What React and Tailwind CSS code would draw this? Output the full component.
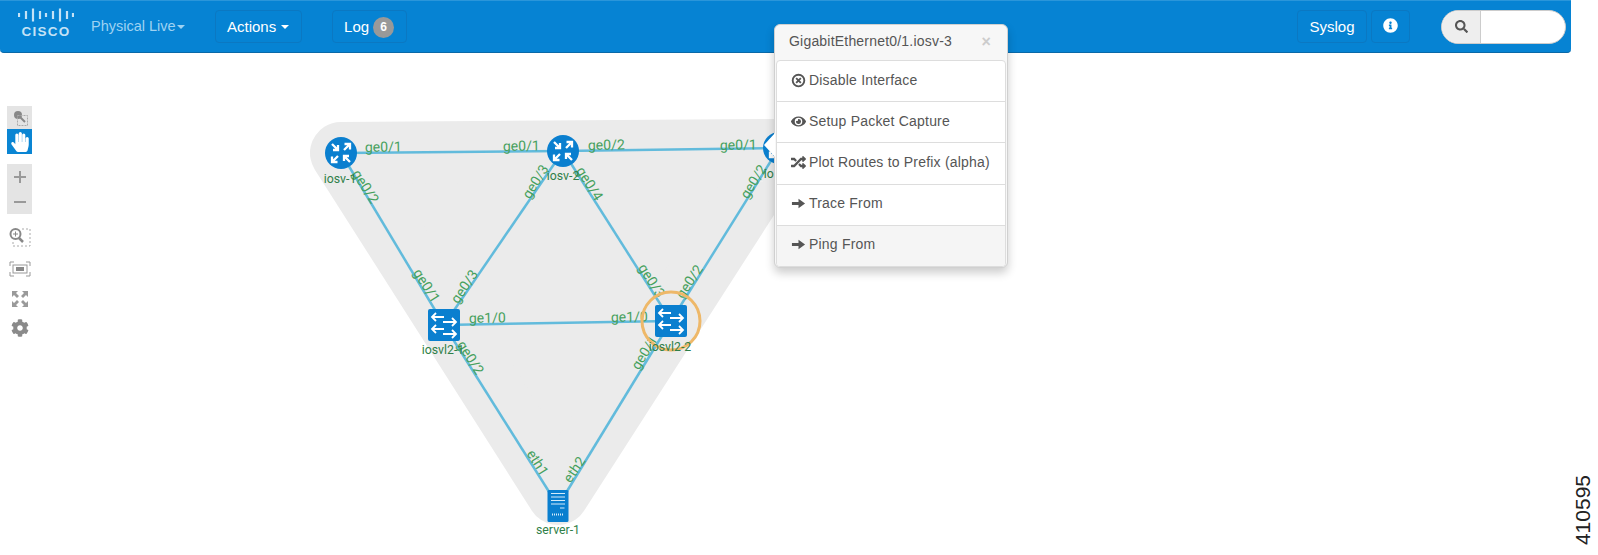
import React from "react";
import { FaCog, FaEye, FaHandPaper, FaInfoCircle, FaRandom, FaSearch } from "react-icons/fa";

const links = [
  [341, 153, 563, 151],
  [563, 151, 779, 148],
  [341, 153, 444, 325],
  [563, 151, 444, 325],
  [563, 151, 671, 321],
  [779, 148, 671, 321],
  [444, 325, 671, 321],
  [444, 325, 558, 506],
  [671, 321, 558, 506],
];

const flatLabels = [
  ["ge0/1", 365, 152, -1],
  ["ge0/1", 503, 151, -1],
  ["ge0/2", 588, 150, -1],
  ["ge0/1", 720, 150, -1],
  ["ge1/0", 469, 323, -1],
  ["ge1/0", 611, 322, -1],
];

const slantLabels = [
  ["ge0/2", 365, 187, 58],
  ["ge0/3", 536, 182, -58],
  ["ge0/4", 589, 184, 58],
  ["ge0/2", 754, 182, -58],
  ["ge0/1", 426, 286, 58],
  ["ge0/3", 465, 287, -56],
  ["ge0/3", 651, 281, 58],
  ["ge0/2", 690, 282, -56],
  ["ge0/2", 470, 358, 58],
  ["ge0/1", 645, 353, -58],
  ["eth1", 537, 463, 58],
  ["eth2", 575, 470, -56],
];

const nodeLabels = [
  ["iosv-1", 340, 183],
  ["iosv-2", 563, 180],
  ["iosv-3", 780, 178],
  ["iosvl2-1", 443, 354],
  ["iosvl2-2", 670, 351],
  ["server-1", 558, 534],
];

const logoBars = [
  [1, 4],
  [8, 8],
  [15, 13],
  [22, 8],
  [28, 4],
  [35, 8],
  [42, 13],
  [49, 8],
  [55, 4],
];

const RemoveIcon = ({ className }) => (
  <svg className={className} viewBox="0 0 16 16">
    <circle cx="8" cy="8" r="6.2" fill="none" stroke="currentColor" strokeWidth="2" />
    <path d="M5.5 5.5 L10.5 10.5 M10.5 5.5 L5.5 10.5" stroke="currentColor" strokeWidth="2" />
  </svg>
);

const ArrowIcon = ({ className }) => (
  <svg className={className} viewBox="0 0 16 16">
    <path d="M1 6.5 H8 V3 L15 8 L8 13 V9.5 H1 Z" fill="currentColor" />
  </svg>
);

const menuItems = [
  { icon: RemoveIcon, label: "Disable Interface" },
  { icon: FaEye, label: "Setup Packet Capture" },
  { icon: FaRandom, label: "Plot Routes to Prefix (alpha)" },
  { icon: ArrowIcon, label: "Trace From" },
  { icon: ArrowIcon, label: "Ping From", active: true },
];

const Router = ({ x, y }) => (
  <g transform={`translate(${x} ${y})`}>
    <circle r="16" fill="#0a7fcf" />
    <g stroke="#fff" strokeWidth="2.3" fill="none">
      <path d="M-9 -9 L-3 -3 M-3 -8 V-3 H-8" />
      <path d="M9 9 L3 3 M3 8 V3 H8" />
      <path d="M3 -3 L9 -9 M3.5 -9 H9 V-3.5" />
      <path d="M-3 3 L-9 9 M-3.5 9 H-9 V3.5" />
    </g>
  </g>
);

const Switch = ({ x, y }) => (
  <g transform={`translate(${x} ${y})`}>
    <rect x="-16" y="-16" width="32" height="32" rx="2" fill="#0a7fcf" />
    <g stroke="#fff" strokeWidth="1.8" fill="none">
      <path d="M-12 -8 H0 M-8 -12 L-12 -8 L-8 -4" />
      <path d="M-1 -3 H12 M8 -7 L12 -3 L8 1" />
      <path d="M-12 4 H0 M-8 0 L-12 4 L-8 8" />
      <path d="M-1 9 H12 M8 5 L12 9 L8 13" />
    </g>
  </g>
);

const Server = ({ x, y }) => (
  <g transform={`translate(${x} ${y})`}>
    <rect x="-10.5" y="-16" width="21" height="32" rx="1.5" fill="#0a7fcf" />
    <g stroke="#d5ecfa" fill="none">
      <path d="M-7 -12.5 H7" />
      <path d="M-7 -9 H7" />
      <path d="M-7 -5.5 H7" />
      <path d="M-7 -2 H7" />
      <path d="M2 2 H6.5" />
      <path d="M-6 8.5 H6" strokeDasharray="1 1" strokeWidth="2" />
    </g>
  </g>
);

const Topology = () => (
  <svg className="absolute left-0 top-0" width="1598" height="555" viewBox="0 0 1598 555">
    <polygon
      points="341,153 779,150 558,494"
      fill="#ebebeb"
      stroke="#ebebeb"
      strokeWidth="62"
      strokeLinejoin="round"
    />
    {links.map(([x1, y1, x2, y2], i) => (
      <line key={i} x1={x1} y1={y1} x2={x2} y2={y2} stroke="#62bbdc" strokeWidth="2.5" />
    ))}
    <g fontFamily="Roboto, sans-serif" fontSize="14" fill="#45a05c">
      {flatLabels.map(([text, x, y, a], i) => (
        <text key={i} x={x} y={y} transform={`rotate(${a} ${x} ${y})`}>
          {text}
        </text>
      ))}
      {slantLabels.map(([text, x, y, a], i) => (
        <text
          key={i}
          x={x}
          y={y + 4}
          textAnchor="middle"
          transform={`rotate(${a} ${x} ${y})`}
        >
          {text}
        </text>
      ))}
    </g>
    <Router x={341} y={153} />
    <Router x={563} y={151} />
    <Router x={779} y={148} />
    <Switch x={444} y={325} />
    <Switch x={671} y={321} />
    <Server x={558} y={506} />
    <circle cx="671" cy="321" r="29" fill="none" stroke="#eeb869" strokeWidth="3" />
    <g fontFamily="Roboto, sans-serif" fontSize="12.3" fill="#2f7f48" textAnchor="middle">
      {nodeLabels.map(([text, x, y], i) => (
        <text key={i} x={x} y={y}>
          {text}
        </text>
      ))}
    </g>
  </svg>
);

const CiscoLogo = () => (
  <div className="flex flex-col items-center w-[56px] mt-[-9px]">
    <svg width="56" height="14" viewBox="0 0 56 14">
      <g stroke="#c4e2f6" strokeWidth="2.2">
        {logoBars.map(([x, h], i) => (
          <line key={i} x1={x} y1={7 - h / 2} x2={x} y2={7 + h / 2} />
        ))}
      </g>
    </svg>
    <span className="text-[13.5px] leading-[11px] font-bold tracking-[1.2px] text-[#c4e2f6] mt-[4px]">CISCO</span>
  </div>
);

const NavButton = ({ className, children }) => (
  <button
    className={`h-[33px] flex items-center justify-center rounded border border-[#0b78c2] text-white text-[15px] ${className}`}
  >
    {children}
  </button>
);

const Caret = ({ className }) => (
  <span className={`inline-block w-0 h-0 border-x-[4px] border-x-transparent border-t-[4px] ${className}`}></span>
);

const NavBar = () => (
  <nav className="relative z-10 h-[53px] mr-[27px] bg-[#0683d3] border-t border-t-[#2a96da] border-b border-b-[#0a69a8] flex items-center pl-[18px] rounded-b-sm">
    <CiscoLogo />
    <span className="ml-[17px] text-[14.5px] pt-[1px] text-[#9ed2f2] flex items-center gap-[1px]">
      Physical Live
      <Caret className="border-t-[#9ed2f2]" />
    </span>
    <NavButton className="ml-[30px] w-[87px] gap-[5px] pt-[1px]">
      Actions
      <Caret className="border-t-white" />
    </NavButton>
    <NavButton className="ml-[30px] w-[75px] gap-[4px] pt-[1px]">
      Log
      <span className="w-[21px] h-[21px] rounded-full bg-[#999] text-[12px] font-bold flex items-center justify-center">
        6
      </span>
    </NavButton>
    <NavButton className="ml-auto w-[70px] pt-[1px]">Syslog</NavButton>
    <NavButton className="ml-[4px] w-[39px] pb-[2px]">
      <FaInfoCircle className="text-[15px]" />
    </NavButton>
    <div className="ml-[31px] mr-[5px] w-[125px] h-[34px] flex rounded-full bg-white border border-[#ccc] overflow-hidden">
      <div className="w-[39px] bg-[#eee] border-r border-[#ccc] flex items-center justify-center">
        <FaSearch className="text-[13px] text-[#555]" />
      </div>
    </div>
  </nav>
);

const ToolGroup = ({ children }) => (
  <div className="w-[25px] flex flex-col bg-[#e4e4e4]">{children}</div>
);

const Toolbar = () => (
  <div className="relative flex flex-col items-center w-[25px] ml-[7px] mt-[53px]">
    <ToolGroup>
      <div className="h-[23px] flex items-center justify-center">
        <svg width="18" height="18" viewBox="0 0 18 18">
          <circle cx="7" cy="6" r="4" fill="#888" />
          <path d="M9 8 L14 13" stroke="#888" strokeWidth="2" />
          <rect x="6.5" y="6.5" width="10" height="10" fill="none" stroke="#aaa" strokeDasharray="2 1" />
        </svg>
      </div>
      <div className="h-[25px] bg-[#0a85d3] flex items-center justify-center">
        <FaHandPaper className="text-[20px] text-white" />
      </div>
    </ToolGroup>
    <div className="w-[25px] mt-[10px]">
      <ToolGroup>
        <div className="h-[25px] flex items-center justify-center">
          <svg width="14" height="14" viewBox="0 0 14 14">
            <path d="M1 7 H13 M7 1 V13" stroke="#999" strokeWidth="2" />
          </svg>
        </div>
        <div className="h-[25px] flex items-center justify-center">
          <svg width="14" height="14" viewBox="0 0 14 14">
            <path d="M1 7 H13" stroke="#999" strokeWidth="2" />
          </svg>
        </div>
      </ToolGroup>
    </div>
    <svg className="mt-[12px]" width="24" height="22" viewBox="0 0 24 22">
      <circle cx="7.5" cy="8" r="5" fill="none" stroke="#888" strokeWidth="2" />
      <path d="M5 8 H10 M7.5 5.5 V10.5" stroke="#888" />
      <path d="M11 12 L15 16" stroke="#888" strokeWidth="2.5" />
      <path d="M14 3 H22 V20 H5 V15" fill="none" stroke="#aaa" strokeDasharray="2 2" />
    </svg>
    <svg className="mt-[13px]" width="22" height="16" viewBox="0 0 22 16">
      <path d="M1 5 V1 H5 M17 1 H21 V5 M21 11 V15 H17 M5 15 H1 V11" fill="none" stroke="#999" />
      <rect x="4" y="4" width="14" height="8" fill="none" stroke="#999" />
      <rect x="7" y="6" width="8" height="4" fill="#888" />
    </svg>
    <svg className="mt-[13px]" width="18" height="18" viewBox="0 0 18 18">
      <g fill="#9a9a9a">
        <path d="M1 1 H7 L5 3 L8 6 L6 8 L3 5 L1 7 Z" />
        <path d="M17 1 V7 L15 5 L12 8 L10 6 L13 3 L11 1 Z" />
        <path d="M1 17 V11 L3 13 L6 10 L8 12 L5 15 L7 17 Z" />
        <path d="M17 17 H11 L13 15 L10 12 L12 10 L15 13 L17 11 Z" />
      </g>
    </svg>
    <FaCog className="mt-[11px] text-[18px] text-[#8a8a8a]" />
  </div>
);

const InterfacePopup = () => (
  <div className="absolute left-[774px] top-[24px] z-20 w-[234px] h-[244px] flex flex-col bg-[#f7f7f7] rounded-md border border-[#d0d0d0] shadow-[0_5px_10px_rgba(0,0,0,0.2)]">
    <span className="absolute left-[-11px] top-[108px] w-0 h-0 border-y-[12px] border-y-transparent border-r-[11px] border-r-white"></span>
    <div className="h-[35px] shrink-0 flex items-center justify-between pl-[14px] pr-[16px] pb-[2px] text-[14px] text-[#555] tracking-[0.2px]">
      <span>GigabitEthernet0/1.iosv-3</span>
      <span className="text-[16px] font-bold text-[#ccc]">×</span>
    </div>
    <ul className="mx-[1px] flex-1 flex flex-col bg-white rounded border border-[#ddd] overflow-hidden">
      {menuItems.map(({ icon: Icon, label, active }, i) => (
        <li
          key={i}
          className={`flex-1 flex items-center pl-[14px] pb-[2px] text-[14px] text-[#555] tracking-[0.2px] ${
            i > 0 ? "border-t border-[#ddd]" : ""
          } ${active ? "bg-[#f5f5f5]" : ""}`}
        >
          <span className="w-[18px] shrink-0">
            <Icon className="w-[15px] h-[15px] text-[#555]" />
          </span>
          {label}
        </li>
      ))}
    </ul>
  </div>
);

export default function App() {
  return (
    <div
      className="relative w-[1598px] h-[555px] overflow-hidden bg-white"
      style={{ fontFamily: '"Liberation Sans", Arial, sans-serif' }}
    >
      <NavBar />
      <Topology />
      <Toolbar />
      <InterfacePopup />
      <span className="absolute left-[1572px] top-[475px] text-[21px] leading-[21px] text-[#222] [writing-mode:vertical-rl] rotate-180">
        410595
      </span>
    </div>
  );
}
